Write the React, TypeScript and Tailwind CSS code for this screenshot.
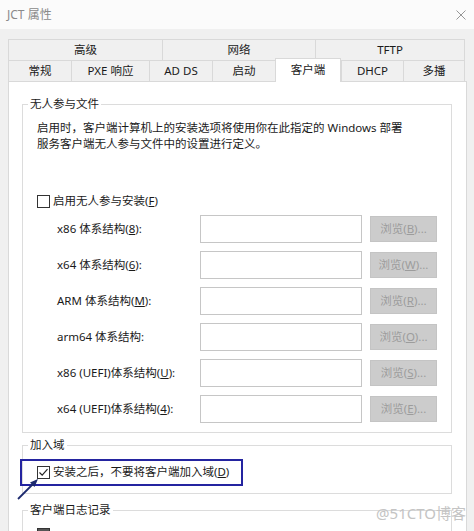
import React from "react";

type Row = { label: React.ReactNode; key: string };

const rows: Row[] = [
  { label: <>x86 体系结构(<u>8</u>):</>, key: "B" },
  { label: <>x64 体系结构(<u>6</u>):</>, key: "W" },
  { label: <>ARM 体系结构(<u>M</u>):</>, key: "R" },
  { label: <>arm64 体系结构:</>, key: "O" },
  { label: <>x86 (UEFI)体系结构(<u>U</u>):</>, key: "S" },
  { label: <>x64 (UEFI)体系结构(<u>4</u>):</>, key: "E" },
];

function Checkbox({ checked }: { checked?: boolean }) {
  return (
    <span className="flex h-[13px] w-[13px] shrink-0 items-center justify-center border border-[#333333] bg-white">
      {checked && (
        <svg width="11" height="11" viewBox="0 0 11 11">
          <path d="M1.5 5.5 L4.2 8.2 L9.5 2.2" fill="none" stroke="#222" strokeWidth="1.2" />
        </svg>
      )}
    </span>
  );
}

function Tab({ label, w, last }: { label: string; w: number; last?: boolean }) {
  return (
    <div
      className={`flex h-[21px] items-center justify-center border-l border-t border-[#d9d9d9] bg-[#f0f0f0] ${last ? "border-r" : ""}`}
      style={{ width: w }}
    >
      {label}
    </div>
  );
}

export default function App() {
  return (
    <div className="relative h-[531px] w-[474px] overflow-hidden bg-[#f0f0f0] font-['Noto_Sans','Noto_Sans_CJK_SC',sans-serif] text-[11.5px] leading-[16px] text-[#1a1a1a]">
      {/* title bar */}
      <div className="flex h-[29px] items-center justify-between bg-[#fbfbfb] pl-[7px] pr-[8px]">
        <span className="text-[12px] text-[#8a8a8a]">JCT 属性</span>
        <svg width="10" height="10" viewBox="0 0 10 10">
          <path d="M0.5 0.5 L9.5 9.5 M9.5 0.5 L0.5 9.5" stroke="#8a8a8a" strokeWidth="0.9" />
        </svg>
      </div>

      <div className="pl-[8px] pt-[10px]">
        {/* tabs */}
        <div className="flex">
          <Tab label="高级" w={154} />
          <Tab label="网络" w={153} />
          <Tab label="TFTP" w={150} last />
        </div>
        <div className="flex h-[21px] items-start">
          <Tab label="常规" w={63} />
          <Tab label="PXE 响应" w={78} />
          <Tab label="AD DS" w={63} />
          <Tab label="启动" w={63} />
          <div className="relative z-10 -mt-[2px] flex h-[24px] w-[66px] items-center justify-center border-x border-t border-[#d9d9d9] bg-white pb-[2px]">
            客户端
          </div>
          <Tab label="DHCP" w={62} />
          <Tab label="多播" w={62} last />
        </div>

        {/* panel */}
        <div className="h-[460px] w-[459px] border border-[#d9d9d9] bg-white pl-[13px] pt-[14px]">
          <fieldset className="w-[430px] border border-[#dcdcdc] pb-[9px]">
            <legend className="ml-[5px] px-[2px] leading-[16px]">无人参与文件</legend>
            <p className="mt-[8px] pl-[14px]">
              启用时，客户端计算机上的安装选项将使用你在此指定的 Windows 部署
              <br />
              服务客户端无人参与文件中的设置进行定义。
            </p>
            <div className="mt-[41px] flex h-[16px] items-center gap-[3px] pl-[14px]">
              <Checkbox />
              <span>
                启用无人参与安装(<u>F</u>)
              </span>
            </div>
            <div className="mt-[6px] flex flex-col gap-[8px]">
              {rows.map((r) => (
                <div key={r.key} className="flex h-[28px] items-center">
                  <div className="w-[177px] pl-[34px]">{r.label}</div>
                  <div className="h-[28px] w-[162px] border border-[#c6c6c6] bg-white" />
                  <div className="ml-[8px] flex h-[26px] w-[67px] items-center justify-center border border-[#c4c4c4] bg-[#cccccc] text-[#9c9c9c]">
                    <span>
                      浏览(<u>{r.key}</u>)...
                    </span>
                  </div>
                </div>
              ))}
            </div>
          </fieldset>

          <fieldset className="mt-[4px] w-[430px] border border-[#dcdcdc] pb-[13px]">
            <legend className="ml-[5px] px-[2px] leading-[16px]">加入域</legend>
            <div className="mt-[11px] flex h-[16px] items-center gap-[3px] pl-[14px]">
              <Checkbox checked />
              <span>
                安装之后，不要将客户端加入域(<u>D</u>)
              </span>
            </div>
          </fieldset>

          <fieldset className="mt-[8px] h-[60px] w-[430px] border border-[#dcdcdc]">
            <legend className="ml-[5px] px-[2px] leading-[16px]">客户端日志记录</legend>
            <div className="mt-[10px] pl-[14px]">
              <span className="block h-[13px] w-[13px] border border-[#333] bg-[#555]" />
            </div>
          </fieldset>
        </div>
      </div>

      {/* annotation */}
      <div className="absolute left-[20px] top-[459px] h-[27px] w-[223px] border-2 border-[#2424a0]" />
      <svg className="absolute left-0 top-0" width="474" height="531" viewBox="0 0 474 531">
        <path d="M18 499 L35 482" stroke="#1c2a6e" strokeWidth="1.8" />
        <path d="M38 479 L30 482.5 L34.5 487 Z" fill="#1c2a6e" />
      </svg>
      <span className="absolute right-[8px] top-[504px] font-['Noto_Sans','Noto_Sans_CJK_SC',sans-serif] text-[15px] leading-[18px] text-[#c4c4c4]">
        @51CTO博客
      </span>
    </div>
  );
}
